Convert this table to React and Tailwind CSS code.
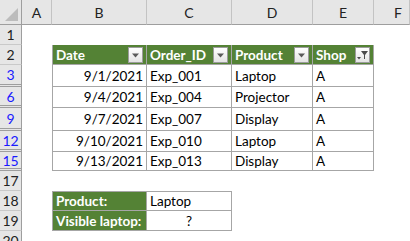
import React from "react";

const F = { fontFamily: "Lato, 'Noto Sans', sans-serif" };

function FilterBtn({ funnel }) {
  return (
    <div className="absolute right-[3px] top-[2px] w-[15px] h-[16px] border border-[#9c9c9c] bg-gradient-to-b from-[#ffffff] to-[#e4e4e4] flex items-center justify-center">
      {funnel ? (
        <svg width="13" height="14" viewBox="0 0 13 14">
          <polygon points="5,3 12,3 9,7 9,11 8,11 8,7" fill="#4a4a4a" />
          <polygon points="1,9 5,9 3,11.5" fill="#4a4a4a" />
        </svg>
      ) : (
        <svg width="13" height="14" viewBox="0 0 13 14">
          <polygon points="3,5.5 10,5.5 6.5,9.5" fill="#5a5a5a" />
        </svg>
      )}
    </div>
  );
}

const colHead = "flex items-center justify-center bg-[#e6e6e6] border-r border-b border-r-[#c3c3c3] border-b-[#9e9e9e] text-[14px] text-[#222]";
const rowHeadBase = "flex items-center justify-center bg-[#e6e6e6] border-r border-r-[#9e9e9e] text-[14px]";

function RowHead({ n, blue, hidden }) {
  return (
    <div
      className={
        rowHeadBase +
        (hidden ? " border-b-[3px] border-double border-b-[#9e9e9e]" : " border-b border-b-[#c9c9c9]") +
        (blue ? " text-[#1a1aff]" : " text-[#222]")
      }
    >
      {n}
    </div>
  );
}

const cell = "flex items-center pt-[1px] border-r border-b border-[#a6a6a6] text-[13.5px] text-black";
const green = "flex items-center pt-[1px] pl-[3px] bg-[#548235] border-r border-b border-[#a6a6a6] text-[13.5px] font-bold text-white";

export default function App() {
  const data = [
    ["3", "9/1/2021", "Exp_001", "Laptop", "A"],
    ["6", "9/4/2021", "Exp_004", "Projector", "A"],
    ["9", "9/7/2021", "Exp_007", "Display", "A"],
    ["12", "9/10/2021", "Exp_010", "Laptop", "A"],
    ["15", "9/13/2021", "Exp_013", "Display", "A"],
  ];
  return (
    <div
      style={F}
      className="w-[410px] h-[241px] overflow-hidden bg-white grid grid-cols-[22px_30px_95px_85px_81px_61px_1fr] grid-rows-[25px_20px_20px_22px_21px_23px_21px_19px_20px_20px_20px_20px]"
    >
      {/* column headers */}
      <div className="relative bg-[#e6e6e6] border-r border-b border-r-[#9e9e9e] border-b-[#9e9e9e]">
        <svg className="absolute right-[3px] bottom-[3px]" width="13" height="13" viewBox="0 0 13 13">
          <polygon points="13,0 13,13 0,13" fill="#bcbcbc" />
        </svg>
      </div>
      <div className={colHead}>A</div>
      <div className={colHead}>B</div>
      <div className={colHead}>C</div>
      <div className={colHead}>D</div>
      <div className={colHead}>E</div>
      <div className={colHead + " justify-start pl-[20px]"}>F</div>

      {/* row 1 */}
      <RowHead n="1" />
      <div className="col-span-6" />

      {/* row 2 header */}
      <RowHead n="2" />
      <div />
      <div className={green + " relative border-l"}>
        Date
        <FilterBtn />
      </div>
      <div className={green + " relative"}>
        Order_ID
        <FilterBtn />
      </div>
      <div className={green + " relative"}>
        Product
        <FilterBtn />
      </div>
      <div className={green + " relative"}>
        Shop
        <FilterBtn funnel />
      </div>
      <div />

      {data.map((r) => (
        <React.Fragment key={r[0]}>
          <RowHead n={r[0]} blue hidden />
          <div />
          <div className={cell + " border-l justify-end pr-[3px]"}>{r[1]}</div>
          <div className={cell + " pl-[3px]"}>{r[2]}</div>
          <div className={cell + " pl-[3px]"}>{r[3]}</div>
          <div className={cell + " pl-[3px]"}>{r[4]}</div>
          <div />
        </React.Fragment>
      ))}

      {/* row 17 */}
      <RowHead n="17" />
      <div className="col-span-6" />

      {/* row 18 */}
      <RowHead n="18" />
      <div />
      <div className={green + " border-l border-t"}>Product:</div>
      <div className={cell + " border-t pl-[3px]"}>Laptop</div>
      <div className="col-span-3" />

      {/* row 19 */}
      <RowHead n="19" />
      <div />
      <div className={green + " border-l"}>Visible laptop:</div>
      <div className={cell + " justify-center"}>?</div>
      <div className="col-span-3" />

      {/* row 20 */}
      <RowHead n="20" />
      <div className="col-span-6" />
    </div>
  );
}
